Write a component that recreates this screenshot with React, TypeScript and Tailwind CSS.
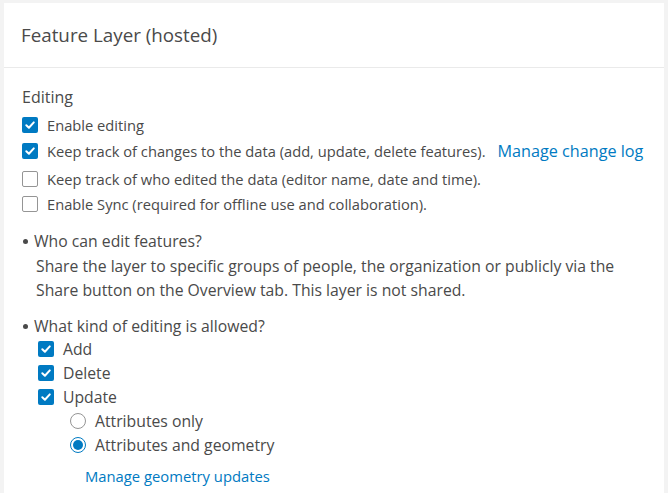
import React from "react";

const Check = ({ checked }: { checked: boolean }) =>
  checked ? (
    <span className="w-4 h-4 rounded-[2px] bg-[#007ac2] flex items-center justify-center shrink-0">
      <svg width="12" height="12" viewBox="0 0 12 12">
        <path d="M2.3 6.2 L4.9 8.7 L9.8 3.4" fill="none" stroke="white" strokeWidth="2" strokeLinecap="round" strokeLinejoin="round" />
      </svg>
    </span>
  ) : (
    <span className="w-4 h-4 rounded-[2px] border border-[#959595] bg-white shrink-0" />
  );

const Radio = ({ checked }: { checked: boolean }) => (
  <span
    className={`w-4 h-4 rounded-full bg-white shrink-0 flex items-center justify-center border ${
      checked ? "border-[#007ac2]" : "border-[#959595]"
    }`}
  >
    {checked && <span className="w-[10px] h-[10px] rounded-full bg-[#007ac2]" />}
  </span>
);

const Row = ({ checked, children }: { checked: boolean; children: React.ReactNode }) => (
  <div className="flex items-center gap-[9px] h-6">
    <Check checked={checked} />
    <span>{children}</span>
  </div>
);

const Bullet = ({ children }: { children: React.ReactNode }) => (
  <div className="flex items-center">
    <span className="w-[5px] h-[5px] rounded-full bg-[#4a4a4a] ml-[1px] mr-[6px]" />
    <span>{children}</span>
  </div>
);

export default function App() {
  return (
    <div
      className="w-[668px] h-[493px] bg-[#f3f3f3] pl-1 pt-[3px] pr-1 overflow-hidden text-[14.7px] text-[#4a4a4a]"
      style={{ fontFamily: "'Open Sans', Lato, sans-serif" }}
    >
      <div className="bg-white h-full">
        {/* Header */}
        <div className="h-[65px] border-b border-[#eaeaea] flex items-center px-[17px]">
          <h2 className="text-[18.8px]">Feature Layer (hosted)</h2>
        </div>

        <div className="pl-[18px] pt-[17px]">
          <div className="text-[16px] leading-6 mb-[4px]">Editing</div>
          <div className="flex flex-col">
            <Row checked>Enable editing</Row>
            <div className="flex items-center h-6 mt-[2px]">
              <Row checked>Keep track of changes to the data (add, update, delete features).</Row>
              <a className="ml-3 text-[16.2px] text-[#007ac2]">Manage change log</a>
            </div>
            <div className="mt-[4px]">
              <Row checked={false}>Keep track of who edited the data (editor name, date and time).</Row>
            </div>
            <div className="mt-[1px]">
              <Row checked={false}>Enable Sync (required for offline use and collaboration).</Row>
            </div>
          </div>

          {/* Who can edit */}
          <div className="mt-[13px] leading-6 text-[15.75px]">
            <Bullet>Who can edit features?</Bullet>
            <div className="pl-[14px] mt-[1px]">
              Share the layer to specific groups of people, the organization or publicly via the
              <br />
              Share button on the Overview tab. This layer is not shared.
            </div>
          </div>

          {/* What kind */}
          <div className="mt-[12px] text-[15.75px] leading-6">
            <Bullet>What kind of editing is allowed?</Bullet>
            <div className="pl-4 -mt-[1px]">
              <Row checked>Add</Row>
              <Row checked>Delete</Row>
              <Row checked>Update</Row>
              <div className="pl-8">
                <div className="flex items-center gap-[9px] h-6">
                  <Radio checked={false} />
                  <span>Attributes only</span>
                </div>
                <div className="flex items-center gap-[9px] h-6">
                  <Radio checked />
                  <span>Attributes and geometry</span>
                </div>
                <a className="block mt-[7px] ml-[15px] text-[14.8px] text-[#007ac2]">Manage geometry updates</a>
              </div>
            </div>
          </div>
        </div>
      </div>
    </div>
  );
}
